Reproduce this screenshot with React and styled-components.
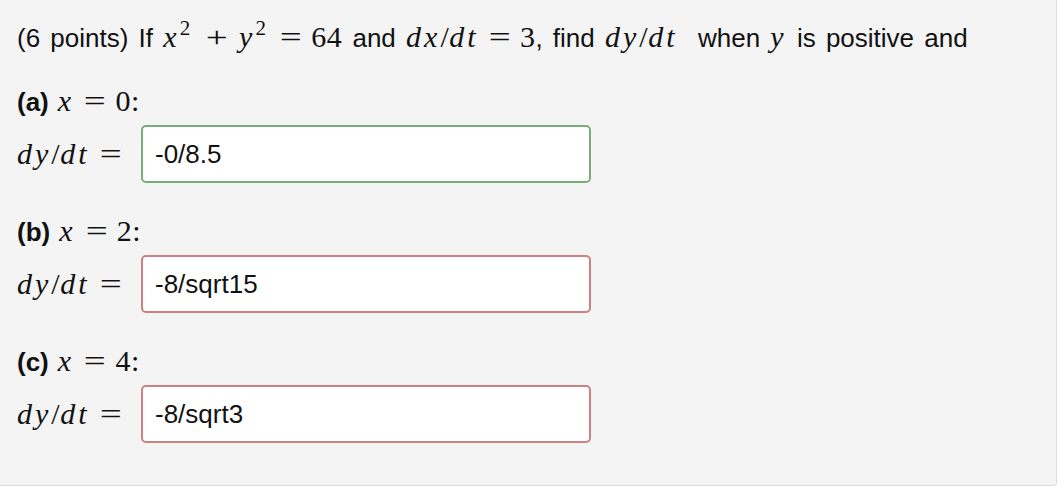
import styled, { createGlobalStyle } from "styled-components";

const GlobalStyle = createGlobalStyle`
  html, body {
    margin: 0;
    padding: 0;
    background: #ffffff;
  }
`;

const Panel = styled.div`
  width: 1057px;
  height: 486px;
  box-sizing: border-box;
  background: #f4f4f4;
  border-right: 1px solid #dcdcdc;
  border-bottom: 1px solid #dcdcdc;
  border-bottom-right-radius: 4px;
  padding: 20px 0 0 17px;
  font-family: "Liberation Sans", Arial, Helvetica, sans-serif;
  font-size: 26px;
  color: #111;
`;

const Question = styled.div`
  height: 34px;
  line-height: 34px;
  white-space: nowrap;
  word-spacing: 3px;
  margin-bottom: 32px;
`;

// math pieces, MathJax-like: serif italic letters, upright digits
const M = styled.span`
  font-family: "Liberation Serif", "Times New Roman", serif;
  font-size: 30px;
  font-style: ${(p) => (p.$up ? "normal" : "italic")};
  letter-spacing: ${(p) => (p.$up ? "0.5px" : "3px")};
  word-spacing: 0;
`;

const Sup = styled.sup`
  font-family: "Liberation Serif", "Times New Roman", serif;
  font-size: 21px;
  font-style: normal;
  vertical-align: 12px;
  line-height: 0;
  margin-right: 4px;
`;

const Op = styled.span`
  display: inline-block;
  font-family: "Liberation Serif", "Times New Roman", serif;
  font-size: 30px;
  width: 0.778em;
  text-align: center;
  transform: scaleX(1.3);
  margin: 0 ${(p) => (p.$bin ? "0.36em" : "0.3em")};
`;

const Part = styled.div`
  margin-bottom: 33px;
`;

const PartLabel = styled.div`
  height: 30px;
  line-height: 30px;
  margin-bottom: 9px;
  white-space: nowrap;
`;

const Bold = styled.b`
  font-weight: bold;
  margin-right: 9px;
`;

const AnswerRow = styled.div`
  display: flex;
  align-items: center;
  height: 58px;
`;

const AnswerLabel = styled.div`
  width: 124px;
  white-space: nowrap;
`;

const Answer = styled.div`
  width: 450px;
  height: 58px;
  box-sizing: border-box;
  border: 2px solid ${(p) => (p.$ok ? "#78ad76" : "#cc8080")};
  border-radius: 5px;
  background: #ffffff;
  padding-left: 12px;
  display: flex;
  align-items: center;
  font-size: 26px;
  color: #111;
`;

const parts = [
  { tag: "(a)", x: "0", value: "-0/8.5", ok: true },
  { tag: "(b)", x: "2", value: "-8/sqrt15", ok: false },
  { tag: "(c)", x: "4", value: "-8/sqrt3", ok: false },
];

const Frac = ({ v }) => (
  <>
    <M>d</M>
    <M>{v}</M>
    <M $up>/</M>
    <M>dt</M>
  </>
);

export default function App() {
  return (
    <>
      <GlobalStyle />
      <Panel>
        <Question>
          (6 points) If{" "}
          <M>x</M>
          <Sup>2</Sup>
          <Op $bin>+</Op>
          <M>y</M>
          <Sup>2</Sup>
          <Op>=</Op>
          <M $up>64</M> and{" "}
          <Frac v="x" />
          <Op>=</Op>
          <M $up>3</M>, find{" "}
          <Frac v="y" />
          &nbsp; when <M>y</M> is positive and
        </Question>
        {parts.map((p) => (
          <Part key={p.tag}>
            <PartLabel>
              <Bold>{p.tag}</Bold>
              <M>x</M>
              <Op>=</Op>
              <M $up>{p.x}:</M>
            </PartLabel>
            <AnswerRow>
              <AnswerLabel>
                <Frac v="y" />
                <Op>=</Op>
              </AnswerLabel>
              <Answer $ok={p.ok}>{p.value}</Answer>
            </AnswerRow>
          </Part>
        ))}
      </Panel>
    </>
  );
}
